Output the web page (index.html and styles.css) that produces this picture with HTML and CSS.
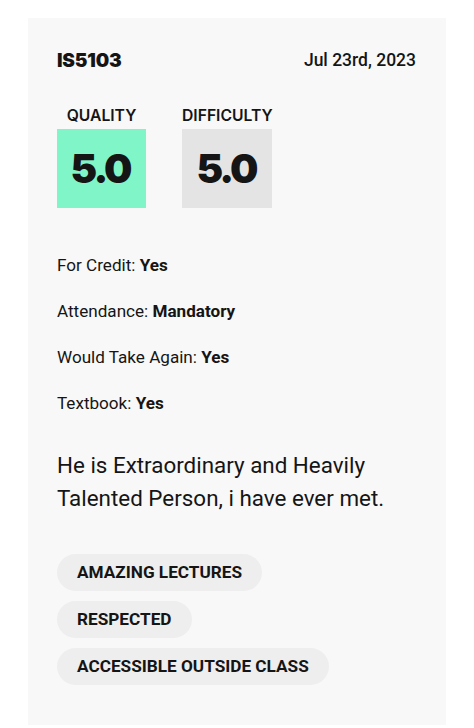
FILE: index.html
```html
<!DOCTYPE html>
<html>
<head>
<meta charset="utf-8">
<link rel="stylesheet" href="styles.css">
</head>
<body>
<div class="card">
  <div class="header">
    <div class="course">IS5103</div>
    <div class="date">Jul 23rd, 2023</div>
  </div>
  <div class="ratings">
    <div class="rating">
      <div class="rating-label">QUALITY</div>
      <div class="rating-box quality">5.0</div>
    </div>
    <div class="rating">
      <div class="rating-label">DIFFICULTY</div>
      <div class="rating-box difficulty">5.0</div>
    </div>
  </div>
  <div class="meta">
    <div class="meta-row">For Credit: <b>Yes</b></div>
    <div class="meta-row">Attendance: <b>Mandatory</b></div>
    <div class="meta-row">Would Take Again: <b>Yes</b></div>
    <div class="meta-row">Textbook: <b>Yes</b></div>
  </div>
  <p class="comment">He is Extraordinary and Heavily Talented Person, i have ever met.</p>
  <div class="tags">
    <span class="tag">AMAZING LECTURES</span>
    <span class="tag">RESPECTED</span>
    <span class="tag">ACCESSIBLE OUTSIDE CLASS</span>
  </div>
</div>
</body>
</html>
```
FILE: styles.css
```css
* { box-sizing: border-box; }
body {
  margin: 0;
  background: #ffffff;
  font-family: Roboto, "Liberation Sans", sans-serif;
  color: #151515;
}
.card {
  margin: 18px 0 0 28px;
  width: 418px;
  background: #f8f8f8;
  padding: 30px 30px 40px 29px;
}
.header {
  display: flex;
  justify-content: space-between;
  align-items: center;
  height: 24px;
}
.course {
  font-family: Inter, sans-serif;
  font-weight: 900;
  font-size: 19px;
  letter-spacing: -0.2px;
}
.date {
  font-weight: 500;
  font-size: 17.5px;
}
.ratings {
  display: flex;
  gap: 36px;
  margin-top: 34px;
}
.rating {
  display: flex;
  flex-direction: column;
  align-items: center;
  gap: 3px;
}
.rating-label {
  font-family: Inter, sans-serif;
  font-weight: 600;
  font-size: 15.7px;
  line-height: 20px;
}
.rating-box {
  width: 89px;
  height: 79px;
  display: flex;
  align-items: center;
  justify-content: center;
  font-family: Inter, sans-serif;
  font-weight: 900;
  font-size: 40px;
  letter-spacing: -3px;
  text-indent: -3px;
}
.quality { background: #80f5c8; }
.difficulty { background: #e4e4e4; width: 90px; }
.meta {
  margin-top: 45px;
  display: flex;
  flex-direction: column;
  gap: 22px;
}
.meta-row {
  font-size: 17.1px;
  line-height: 24px;
}
.meta-row b { font-weight: 700; }
.comment {
  margin: 34px 0 0;
  font-size: 22.4px;
  line-height: 33px;
}
.tags {
  margin-top: 39px;
  display: flex;
  flex-direction: column;
  align-items: flex-start;
  gap: 10px;
}
.tag {
  display: inline-block;
  background: #eeeeee;
  border-radius: 19px;
  height: 37px;
  line-height: 37px;
  padding: 0 20px;
  font-weight: 700;
  font-size: 17.2px;
}
```
